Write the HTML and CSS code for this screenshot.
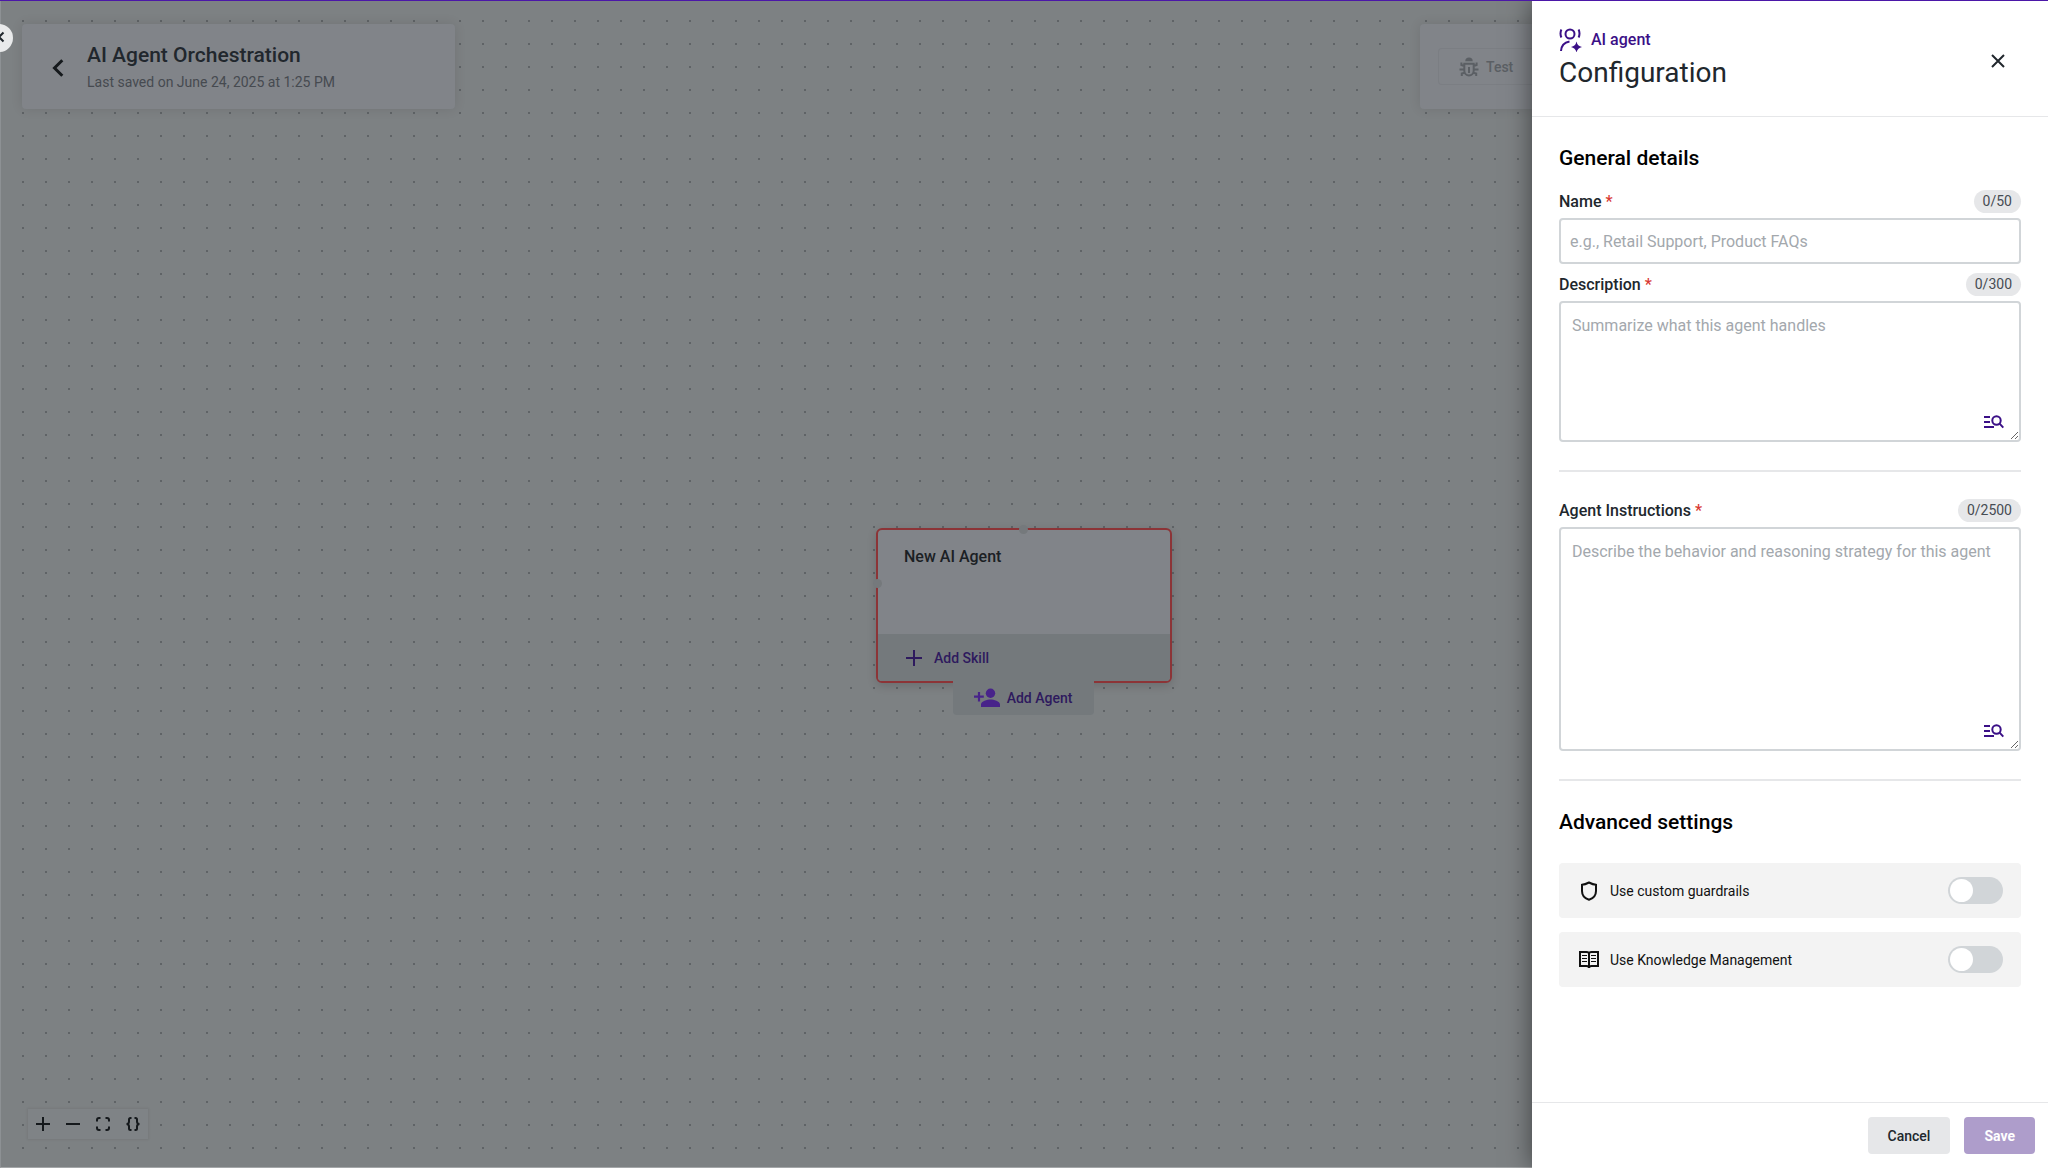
FILE: index.html
```html
<!DOCTYPE html>
<html lang="en">
<head>
    <meta charset="UTF-8">
    <meta name="viewport" content="width=device-width, initial-scale=1.0">
    <title>AI Agent Orchestration</title>
    <link rel="stylesheet" href="styles.css">
</head>
<body>
    <div class="app">
        <main class="canvas">
            <button class="collapse" aria-label="Collapse menu">
                <svg width="8" height="12" viewBox="0 0 8 12"><path d="M6.5 1.5L2 6l4.5 4.5"/></svg>
            </button>

            <header class="toolbar">
                <div class="title-card">
                    <button class="back" aria-label="Back">
                        <svg width="12" height="18" viewBox="0 0 12 18"><path d="M10.3 1.3L2.5 9l7.8 7.7"/></svg>
                    </button>
                    <div>
                        <h1>AI Agent Orchestration</h1>
                        <p>Last saved on June 24, 2025 at 1:25 PM</p>
                    </div>
                </div>
                <div class="actions-card">
                    <button class="test" disabled>
                        <svg width="20" height="20" viewBox="0 0 20 20">
                            <path class="fill" d="M6.3 4.2a3.7 3.7 0 0 1 7.4 0z"/>
                            <path d="M5.3 6.8h9.4v7a4.7 4.7 0 0 1-9.4 0zM10 10v6M5.3 9L2.4 8V5.400M14.7 9l2.900-1V5.400M5.3 12.500H.5M14.7 12.500h4.800M5.600 15.800l-2.800.800v2.400M14.400 15.800l2.800.800v2.400"/>
                        </svg>
                        Test
                    </button>
                </div>
            </header>

            <div class="node-wrap">
                <section class="node">
                    <span class="handle handle-top"></span>
                    <span class="handle handle-left"></span>
                    <h2>New AI Agent</h2>
                    <button class="add-skill">
                        <svg width="18" height="18" viewBox="0 0 18 18"><path d="M9 1v16M1 9h16"/></svg>
                        Add Skill
                    </button>
                </section>
                <button class="add-agent">
                    <svg width="26" height="20" viewBox="0 0 26 20">
                        <circle cx="16.5" cy="5.2" r="4.7"/>
                        <path d="M7 19v-2.6c0-3.2 6.3-4.8 9.5-4.8s9.5 1.6 9.5 4.8V19zM3.9 4h2.2v3.6h3.7v2.2H6.1v3.7H3.9V9.8H0V7.6h3.9z"/>
                    </svg>
                    Add Agent
                </button>
            </div>

            <div class="zoom-controls">
                <button aria-label="Zoom in"><svg width="14" height="14" viewBox="0 0 14 14"><path d="M7 0v14M0 7h14"/></svg></button>
                <button aria-label="Zoom out"><svg width="14" height="14" viewBox="0 0 14 14"><path d="M0 7h14"/></svg></button>
                <button aria-label="Fit view"><svg width="14" height="14" viewBox="0 0 14 14"><path d="M1 4.5V3a2 2 0 0 1 2-2h1.5M9.5 1H11a2 2 0 0 1 2 2v1.5M13 9.5V11a2 2 0 0 1-2 2H9.5M4.5 13H3a2 2 0 0 1-2-2V9.5"/></svg></button>
                <button aria-label="View JSON"><svg width="14" height="14" viewBox="0 0 14 14"><path d="M5.500 1H4.500Q3 1 3 2.500v2Q3 7 .500 7 3 7 3 9.500v2Q3 13 4.500 13h1M8.500 1h1Q11 1 11 2.500v2Q11 7 13.500 7 11 7 11 9.500v2Q11 13 9.500 13h-1"/></svg></button>
            </div>
        </main>

        <aside class="panel">
            <header class="panel-header">
                <div>
                    <div class="kind">
                        <svg width="24" height="24" viewBox="0 0 24 24">
                            <circle cx="11" cy="6" r="4.5"/>
                            <path d="M2.4 1.5Q.6 5.5 2.4 9.5M19.6 1.5q1.8 4 0 8M2 23c.3-5 3-8.5 8.500-9.500"/>
                            <path class="fill" d="M17.500 13.500q.900 4.600 5.500 5.500-4.600.900-5.500 5.500-.900-4.600-5.500-5.500 4.600-.900 5.500-5.500z"/>
                        </svg>
                        AI agent
                    </div>
                    <h2>Configuration</h2>
                </div>
                <button class="close" aria-label="Close">
                    <svg width="14" height="14" viewBox="0 0 14 14"><path d="M1 1l12 12M13 1L1 13"/></svg>
                </button>
            </header>

            <form class="panel-body">
                <h3>General details</h3>
                <div class="field">
                    <div class="field-head">
                        <label for="name">Name <span class="required">*</span></label>
                        <span class="count">0/50</span>
                    </div>
                    <input type="text" id="name" placeholder="e.g., Retail Support, Product FAQs">
                </div>
                <div class="field">
                    <div class="field-head">
                        <label for="description">Description <span class="required">*</span></label>
                        <span class="count">0/300</span>
                    </div>
                    <div class="area">
                        <textarea id="description" class="short" placeholder="Summarize what this agent handles"></textarea>
                        <button type="button" class="expand" aria-label="Expand description">
                            <svg width="20" height="14" viewBox="0 0 20 14"><path d="M0 2h6M0 7h6M0 12h10M15.6 8.6L19.3 12.7"/><circle cx="12.5" cy="5.5" r="4.2"/></svg>
                        </button>
                    </div>
                </div>
                <hr>
                <div class="field">
                    <div class="field-head">
                        <label for="instructions">Agent Instructions <span class="required">*</span></label>
                        <span class="count">0/2500</span>
                    </div>
                    <div class="area">
                        <textarea id="instructions" class="tall" placeholder="Describe the behavior and reasoning strategy for this agent"></textarea>
                        <button type="button" class="expand" aria-label="Expand instructions">
                            <svg width="20" height="14" viewBox="0 0 20 14"><path d="M0 2h6M0 7h6M0 12h10M15.6 8.6L19.3 12.7"/><circle cx="12.5" cy="5.5" r="4.2"/></svg>
                        </button>
                    </div>
                </div>
                <hr>
                <h3 class="advanced">Advanced settings</h3>
                <div class="settings">
                    <label class="setting">
                        <svg width="20" height="20" viewBox="0 0 20 20"><path d="M10 1.500Q14 3.500 17 3.800V10c0 4.500-3 7.500-7 8.800-4-1.300-7-4.300-7-8.800V3.800Q6 3.500 10 1.500z"/></svg>
                        <span>Use custom guardrails</span>
                        <input type="checkbox" class="toggle">
                    </label>
                    <label class="setting">
                        <svg width="20" height="20" viewBox="0 0 20 20"><path d="M10 3.200v13.500M1 2h6.500q2.500 0 2.500 1.500Q10 2 12.500 2H19v14h-6.500q-2.500 0-2.500 2 0-2-2.500-2H1z"/><path class="thin" d="M3 5.500h5M3 8.500h5M3 11.500h5M12 5.500h5M12 8.500h5M12 11.500h5"/></svg>
                        <span>Use Knowledge Management</span>
                        <input type="checkbox" class="toggle">
                    </label>
                </div>
            </form>

            <footer class="panel-footer">
                <button class="btn">Cancel</button>
                <button class="btn btn-primary" disabled>Save</button>
            </footer>
        </aside>
    </div>
</body>
</html>
```
FILE: styles.css
```css
* {
    box-sizing: border-box;
}
body {
    margin: 0;
    font-family: Roboto, "Liberation Sans", sans-serif;
    color: #21272d;
}
h1, h2, h3, p {
    margin: 0;
    font-weight: 500;
}
button, input, textarea {
    font-family: inherit;
    margin: 0;
}
button {
    border: none;
    background: none;
    padding: 0;
    color: inherit;
    cursor: pointer;
}
svg {
    flex: none;
    fill: none;
    stroke: currentColor;
    stroke-width: 2;
}
.fill {
    fill: currentColor;
    stroke: none;
}
.app {
    display: flex;
    height: 100vh;
    overflow: hidden;
    border-top: 1px solid #4b17a8;
}

/* Canvas, dimmed while the panel is open */
.canvas {
    position: relative;
    flex: 1;
    display: flex;
    flex-direction: column;
    justify-content: space-between;
    padding: 23px 0 28px 21px;
    border-left: 1px solid #8d9194;
    border-bottom: 1px solid #a4a7a9;
    background-color: #7d8183;
    background-image: radial-gradient(circle at 1px 1px, #5f6366 1px, transparent 1px);
    background-size: 23px 23px;
    background-position: 21px 19px;
}
.collapse {
    position: absolute;
    left: -16px;
    top: 23px;
    width: 28px;
    height: 28px;
    border-radius: 50%;
    background: #e9eaeb;
    text-align: right;
    padding-right: 8px;
}
.toolbar {
    display: flex;
    justify-content: space-between;
}
.title-card, .actions-card {
    display: flex;
    align-items: center;
    height: 85px;
    background: #818489;
    border-radius: 4px;
    box-shadow: 0 0 12px rgba(0, 0, 0, 0.1);
}
.title-card {
    width: 433px;
    padding: 2px 0 0 30px;
    gap: 23px;
}
.title-card h1 {
    font-size: 21px;
    line-height: 28px;
}
.title-card p {
    font-size: 14px;
    line-height: 26px;
    font-weight: 400;
    color: #464a50;
}
.back {
    color: #15191c;
    display: flex;
}
.back svg {
    stroke-width: 3;
}
.actions-card {
    width: 112px;
    padding-left: 18px;
    border-radius: 4px 0 0 4px;
}
.test {
    display: flex;
    align-items: center;
    gap: 7px;
    flex: 1;
    height: 37px;
    padding-left: 20px;
    border: 1px solid #7b7e83;
    border-right: none;
    border-radius: 4px 0 0 4px;
    font-size: 14px;
    font-weight: 500;
    color: #5b5f64;
}
.node-wrap {
    position: absolute;
    left: 875px;
    top: 527px;
    width: 296px;
    display: flex;
    flex-direction: column;
    align-items: center;
}
.node {
    position: relative;
    width: 100%;
    border: 2px solid #8c3437;
    border-radius: 6px;
    background: #818489;
    box-shadow: 0 3px 10px rgba(0, 0, 0, 0.15);
}
.node h2 {
    height: 104px;
    padding: 16px 26px;
    font-size: 16px;
    line-height: 22px;
    color: #1b2024;
}
.handle {
    position: absolute;
    width: 9px;
    height: 9px;
    border-radius: 50%;
    background: #75797c;
}
.handle-top {
    top: -5px;
    left: 141px;
}
.handle-left {
    top: 49px;
    left: -5px;
}
.add-skill {
    display: flex;
    align-items: center;
    gap: 11px;
    width: 100%;
    height: 47px;
    padding-left: 27px;
    border-radius: 0 0 4px 4px;
    background: #74797c;
    font-size: 14px;
    font-weight: 500;
    color: #2e1a5e;
}
.add-agent {
    position: relative;
    display: flex;
    align-items: center;
    justify-content: center;
    gap: 7px;
    width: 141px;
    height: 35px;
    margin: -3px 2px 0 0;
    border-radius: 0 0 4px 4px;
    background: #74797c;
    font-size: 14px;
    font-weight: 500;
    color: #2e1a5e;
}
.add-agent svg {
    fill: #48238a;
    stroke: none;
}
.zoom-controls {
    display: flex;
    align-self: flex-start;
    margin-left: 6px;
    background: #7f8386;
    box-shadow: 0 0 2px 1px rgba(0, 0, 0, 0.06);
    color: #15191c;
}
.zoom-controls button {
    display: flex;
    align-items: center;
    justify-content: center;
    width: 30px;
    height: 30px;
}

/* Configuration panel */
.panel {
    position: relative;
    display: flex;
    flex-direction: column;
    width: 516px;
    background: #fff;
    box-shadow: 0 0 24px rgba(0, 0, 0, 0.5);
}
.panel-header {
    display: flex;
    align-items: center;
    justify-content: space-between;
    height: 116px;
    padding: 5px 43px 0 27px;
    border-bottom: 1px solid #e6e7e9;
}
.kind {
    display: flex;
    align-items: center;
    gap: 8px;
    font-size: 16px;
    line-height: 24px;
    font-weight: 500;
    color: #3b1087;
}
.panel-header h2 {
    font-size: 28px;
    line-height: 42px;
    font-weight: 400;
}
.close {
    display: flex;
}
.panel-body {
    flex: 1;
    min-height: 0;
    overflow: hidden;
    padding: 27px;
}
.panel-body h3 {
    font-size: 21px;
    line-height: 28px;
    color: #000;
    margin-bottom: 18px;
}
.field {
    margin-bottom: 9px;
}
.field-head {
    display: flex;
    align-items: center;
    justify-content: space-between;
    margin-bottom: 5px;
    font-size: 16px;
    line-height: 23px;
    font-weight: 500;
}
.required {
    color: #d93a33;
}
.count {
    padding: 0 9px;
    border-radius: 12px;
    background: #e6e7e9;
    font-size: 14px;
    font-weight: 400;
    color: #464c53;
}
.field input, .field textarea {
    display: block;
    width: 100%;
    border: 2px solid #d1d5d8;
    border-radius: 4px;
    background: #fff;
    font-size: 16px;
    line-height: 22px;
    color: #21272d;
}
.field input {
    height: 46px;
    padding: 0 9px;
}
.field textarea {
    padding: 12px 11px;
    resize: vertical;
}
.field .short {
    height: 141px;
}
.field .tall {
    height: 224px;
}
::placeholder {
    color: #a3a8ad;
}
.area {
    position: relative;
}
.expand {
    position: absolute;
    right: 17px;
    bottom: 13px;
    display: flex;
    color: #3b1087;
}
hr {
    margin: 28px 0 27px;
    border: none;
    border-top: 2px solid #e6e7e9;
}
.panel-body .advanced {
    margin-bottom: 27px;
}
.settings {
    display: grid;
    gap: 14px;
}
.setting {
    display: flex;
    align-items: center;
    gap: 11px;
    height: 55px;
    padding: 0 18px 0 20px;
    border-radius: 4px;
    background: #f3f3f3;
    font-size: 14px;
    color: #111;
}
.setting .thin {
    stroke-width: 1;
}
.toggle {
    appearance: none;
    width: 55px;
    height: 27px;
    margin-left: auto;
    padding: 2px;
    border-radius: 14px;
    background: #d1d5d8;
    cursor: pointer;
}
.toggle::before {
    content: "";
    display: block;
    width: 23px;
    height: 23px;
    border-radius: 50%;
    background: #fff;
}
.toggle:checked {
    background: #4b17a8;
}
.toggle:checked::before {
    margin-left: auto;
}
.panel-footer {
    display: flex;
    justify-content: flex-end;
    gap: 14px;
    padding: 14px 13px;
    border-top: 1px solid #e6e7e9;
}
.btn {
    height: 37px;
    padding: 0 20px;
    border-radius: 4px;
    background: #e6e7e9;
    font-size: 14px;
    font-weight: 500;
}
.btn-primary {
    background: #ae9dcb;
    color: #fff;
    font-weight: 700;
}
```
